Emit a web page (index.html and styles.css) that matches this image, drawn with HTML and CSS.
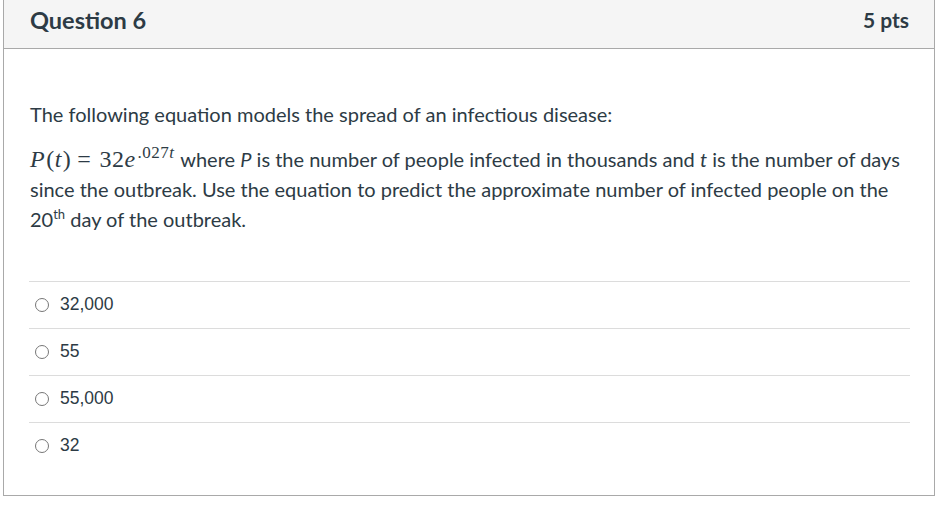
FILE: index.html
```html
<!DOCTYPE html>
<html>
<head>
<meta charset="utf-8">
<link rel="stylesheet" href="styles.css">
</head>
<body>
<div class="question">
  <div class="q-header">
    <span class="q-title">Question 6</span>
    <span class="q-points">5 pts</span>
  </div>
  <div class="q-body">
    <p>The following equation models the spread of an infectious disease:</p>
    <p><span class="math"><i>P</i>(<i>t</i>)<span class="eq">=</span>32<i>e</i><sup>.027<i>t</i></sup></span> where <i>P</i> is the number of people infected in thousands and <i>t</i> is the number of days since the outbreak. Use the equation to predict the approximate number of infected people on the 20<sup class="th">th</sup> day of the outbreak.</p>
    <div class="answers">
      <div class="answer"><span class="radio"></span><span class="label">32,000</span></div>
      <div class="answer"><span class="radio"></span><span class="label">55</span></div>
      <div class="answer"><span class="radio"></span><span class="label">55,000</span></div>
      <div class="answer"><span class="radio"></span><span class="label">32</span></div>
    </div>
  </div>
</div>
</body>
</html>
```
FILE: styles.css
```css
html, body {
  margin: 0;
  padding: 0;
  background: #fff;
}
body {
  font-family: Lato, "Noto Sans", sans-serif;
  color: #2d3b45;
}
.question {
  margin-left: 3px;
  width: 930px;
  border: 1px solid #a9a9a9;
  border-top: none;
}
.q-header {
  height: 48px;
  background: #f5f5f5;
  border-bottom: 1px solid #a9a9a9;
  display: flex;
  align-items: center;
  justify-content: space-between;
  padding: 0 25px 0 26px;
}
.q-title {
  font-weight: bold;
  font-size: 23.5px;
  margin-top: -9px;
}
.q-points {
  font-size: 21px;
  font-weight: bold;
  margin-top: -9px;
}
.q-body {
  padding: 50px 0 26px 26px;
}
.q-body p {
  margin: 0 0 15px 0;
  font-size: 20px;
  line-height: 30px;
  padding-right: 24px;
}
.math {
  font-family: "Liberation Serif", "DejaVu Serif", serif;
  font-size: 24px;
  letter-spacing: 0.5px;
}
.math i {
  padding-right: 1px;
}
.math .eq {
  margin: 0 8px 0 6px;
}
.math sup {
  font-size: 17px;
  vertical-align: 0;
  position: relative;
  top: -9px;
  line-height: 0;
  margin-left: 1px;
}
sup.th {
  font-size: 13px;
  vertical-align: 0;
  position: relative;
  top: -8px;
  line-height: 0;
}
.answers {
  margin-top: 47px;
  margin-left: -1px;
  margin-right: 24px;
}
.answer {
  height: 46px;
  border-top: 1px solid #dcdcdc;
  display: flex;
  align-items: center;
  font-family: "Liberation Sans", Arial, sans-serif;
  font-size: 17.5px;
}
.label {
  margin-top: -2px;
}
.radio {
  width: 12px;
  height: 12px;
  border: 1px solid #777;
  border-radius: 50%;
  margin-left: 6px;
  margin-right: 11px;
  margin-top: -1px;
}
```
